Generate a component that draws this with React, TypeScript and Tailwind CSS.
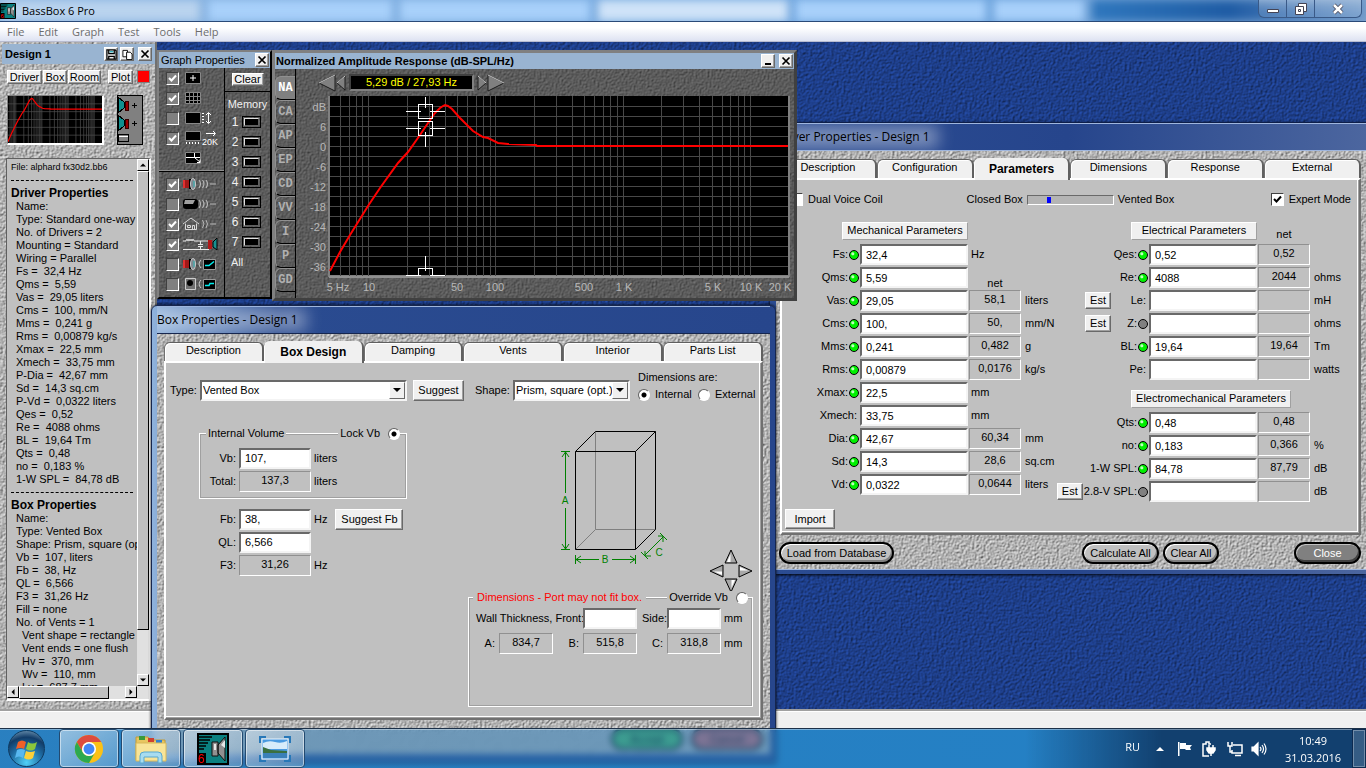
import { useId, type ReactNode } from "react";

type Tone = "light" | "dark" | "blue";

const FILTER: Record<Tone, string> = {
  light: "url(#tex-light)",
  dark: "url(#tex-dark)",
  blue: "url(#tex-blue)",
};

/** Embossed stone patterns shared by every surface of the desktop */
function TextureDefs() {
  const tones = [
    { id: "tex-light", color: "#b4b4b4", depth: 0.9, freq: 0.45 },
    { id: "tex-dark", color: "#5c5c5c", depth: 0.7, freq: 0.5 },
    { id: "tex-blue", color: "#1e3f8b", depth: 0.8, freq: 0.42 },
  ];
  return (
    <svg aria-hidden className="absolute size-0">
      <defs>
        {tones.map((t) => (
          <filter key={t.id} id={t.id} x="0" y="0" width="100%" height="100%" colorInterpolationFilters="sRGB">
            <feTurbulence type="fractalNoise" baseFrequency={t.freq} numOctaves="2" seed="4" />
            <feDiffuseLighting surfaceScale={t.depth} diffuseConstant="1.4" lightingColor={t.color}>
              <feDistantLight azimuth="225" elevation="45" />
            </feDiffuseLighting>
          </filter>
        ))}
      </defs>
    </svg>
  );
}

function Texture({ tone }: { tone: Tone }) {
  return (
    <svg aria-hidden className="absolute inset-0 -z-10 size-full">
      <rect width="100%" height="100%" filter={FILTER[tone]} />
    </svg>
  );
}

function Button({ children, className = "" }: { children: ReactNode; className?: string }) {
  return (
    <button
      type="button"
      className={`flex shrink-0 items-center justify-center border border-t-white border-l-white border-r-[#696969] border-b-[#696969] bg-[#f0f0f0] whitespace-nowrap text-black shadow-[inset_-1px_-1px_0_#a0a0a0] ${className}`}
    >
      {children}
    </button>
  );
}

function PillButton({ children, className = "" }: { children: ReactNode; className?: string }) {
  return (
    <button
      type="button"
      className={`h-[22px] rounded-full border-2 border-black px-1 whitespace-nowrap ${className}`}
    >
      {children}
    </button>
  );
}

function Check({ label, checked, dim = false }: { label: string; checked: boolean; dim?: boolean }) {
  return (
    <span className="relative flex size-[13px] shrink-0">
      <input
        type="checkbox"
        aria-label={label}
        defaultChecked={checked}
        className={`peer size-[13px] appearance-none border border-t-[#404040] border-l-[#404040] border-r-white border-b-white ${dim ? "bg-[#808080]" : "bg-white"}`}
      />
      <svg viewBox="0 0 13 13" className="pointer-events-none absolute inset-0 hidden peer-checked:block">
        <path d="M3 6l2.5 2.5L10 3.5" fill="none" stroke={dim ? "#fff" : "#000"} strokeWidth="2" />
      </svg>
    </span>
  );
}

function Radio({ name, label, checked }: { name: string; label: string; checked: boolean }) {
  return (
    <input
      type="radio"
      name={name}
      aria-label={label}
      defaultChecked={checked}
      className="size-3 shrink-0 appearance-none rounded-full border border-t-[#606060] border-l-[#606060] border-r-white border-b-white bg-white checked:bg-[radial-gradient(circle,#000_0_2px,#fff_3px)]"
    />
  );
}

function Select({ id, value, className }: { id: string; value: string; className: string }) {
  return (
    <div className={`relative h-[21px] shrink-0 ${className}`}>
      <select
        id={id}
        defaultValue={value}
        className="size-full appearance-none border-2 border-t-[#696969] border-l-[#696969] border-r-[#f4f4f4] border-b-[#f4f4f4] bg-white pl-px"
      >
        <option>{value}</option>
      </select>
      <span className="pointer-events-none absolute inset-y-[2px] right-[2px] flex w-4 items-center justify-center border border-t-white border-l-white border-r-[#696969] border-b-[#696969] bg-[#f0f0f0]">
        <svg viewBox="0 0 8 4" className="h-1 w-2">
          <path d="M0 0h8L4 4z" />
        </svg>
      </span>
    </div>
  );
}

const INPUT =
  "h-[21px] shrink-0 border-2 border-t-[#696969] border-l-[#696969] border-r-[#f4f4f4] border-b-[#f4f4f4] bg-white pl-1";
const READOUT =
  "block h-[21px] shrink-0 border border-t-[#909090] border-l-[#909090] border-r-white border-b-white bg-[#c0c0c0] text-center leading-[17px]";

function Led({ on }: { on: boolean }) {
  return (
    <span className="flex w-3 shrink-0 justify-center">
      <span
        className={`size-[10px] rounded-full border border-black ${on ? "bg-[radial-gradient(circle_at_35%_35%,#c0ffc0_0_1px,#00f000_2px)]" : "bg-[#808080]"}`}
      />
    </span>
  );
}

type Param = {
  label: string;
  value: string;
  net?: string;
  caption?: string;
  unit?: string;
  led?: boolean;
  est?: boolean;
};

const MECHANICAL: Param[] = [
  { label: "Fs:", value: "32,4", unit: "Hz", led: true },
  { label: "Qms:", value: "5,59", caption: "net", led: true },
  { label: "Vas:", value: "29,05", net: "58,1", unit: "liters", led: true },
  { label: "Cms:", value: "100,", net: "50,", unit: "mm/N", led: true },
  { label: "Mms:", value: "0,241", net: "0,482", unit: "g", led: true },
  { label: "Rms:", value: "0,00879", net: "0,0176", unit: "kg/s", led: true },
  { label: "Xmax:", value: "22,5", unit: "mm", led: true },
  { label: "Xmech:", value: "33,75", unit: "mm" },
  { label: "Dia:", value: "42,67", net: "60,34", unit: "mm", led: true },
  { label: "Sd:", value: "14,3", net: "28,6", unit: "sq.cm", led: true },
  { label: "Vd:", value: "0,0322", net: "0,0644", unit: "liters", led: true },
];

const ELECTRICAL: Param[] = [
  { label: "Qes:", value: "0,52", net: "0,52", led: true },
  { label: "Re:", value: "4088", net: "2044", unit: "ohms", led: true },
  { label: "Le:", value: "", net: "", unit: "mH", est: true },
  { label: "Z:", value: "", net: "", unit: "ohms", led: false, est: true },
  { label: "BL:", value: "19,64", net: "19,64", unit: "Tm", led: true },
  { label: "Pe:", value: "", net: "", unit: "watts" },
];

const ELECTROMECHANICAL: Param[] = [
  { label: "Qts:", value: "0,48", net: "0,48", led: true },
  { label: "no:", value: "0,183", net: "0,366", unit: "%", led: true },
  { label: "1-W SPL:", value: "84,78", net: "87,79", unit: "dB", led: true },
  { label: "2.8-V SPL:", value: "", net: "", unit: "dB", led: false, est: true },
];

function ParamRow({ p, lead }: { p: Param; lead: string }) {
  const id = useId();
  return (
    <div className="flex h-[23px] items-start">
      <div className={`flex h-[21px] shrink-0 items-center justify-end ${lead}`}>
        {p.est && <Button className="mr-px h-[17px] w-[26px]">Est</Button>}
        <label
          htmlFor={id}
          className={`text-right whitespace-nowrap ${p.led === undefined ? "min-w-[37px] pr-[3px]" : "min-w-[25px]"}`}
        >
          {p.label}
        </label>
        {p.led !== undefined && <Led on={p.led} />}
      </div>
      <input id={id} defaultValue={p.value} className={`w-[108px] ${INPUT}`} />
      {p.net !== undefined && <output className={`ml-px w-[52px] ${READOUT}`}>{p.net}</output>}
      {p.caption && <span className="ml-px w-[52px] self-end text-center">{p.caption}</span>}
      {p.unit && <span className={`leading-[21px] ${p.net === undefined ? "ml-[3px]" : "ml-1"}`}>{p.unit}</span>}
    </div>
  );
}

function SectionTitle({ children, className }: { children: ReactNode; className: string }) {
  return (
    <h3
      className={`h-[18px] border border-t-white border-l-white border-r-[#a0a0a0] border-b-[#a0a0a0] bg-[#f0f0f0] text-center leading-[15px] ${className}`}
    >
      {children}
    </h3>
  );
}

function Tabs({ items, active }: { items: string[]; active: string }) {
  return (
    <div role="tablist" className="flex h-[19px] items-end">
      {items.map((item) => (
        <button
          key={item}
          type="button"
          role="tab"
          aria-selected={item === active}
          className={
            item === active
              ? "z-10 -mb-0.5 h-[22px] flex-1 rounded-t-md border-r-2 border-l border-r-[#606060] border-l-white bg-[#f0f0f0] text-xs font-bold"
              : "h-[19px] flex-1 rounded-t-md border-t border-r-2 border-l border-t-[#606060] border-r-[#606060] border-l-[#707070] bg-[#f0f0f0] pb-[3px] shadow-[inset_1px_1px_0_#fff]"
          }
        >
          {item}
        </button>
      ))}
    </div>
  );
}

function Panel({ children }: { children: ReactNode }) {
  return (
    <div className="border-2 border-t-white border-l-white border-r-[#707070] border-b-[#707070] bg-[#c0c0c0] shadow-[inset_-1px_-1px_0_#a0a0a0,inset_-2px_-2px_0_#fff]">
      {children}
    </div>
  );
}

/** Glass caption with the soft glow behind its text */
function Caption({ children }: { children: ReactNode }) {
  return (
    <h2 className="h-[27px] overflow-hidden border-t border-[#9fb6de] font-['Open_Sans',sans-serif] text-xs leading-[26px]">
      <span className="relative isolate inline-block">
        <span aria-hidden className="absolute -inset-x-2 inset-y-0.5 -z-10 bg-white/40 blur-sm" />
        {children}
      </span>
    </h2>
  );
}

/* ---------- left column: design summary ---------- */

const DRIVER_LINES = [
  "Name:",
  "Type: Standard one-way d",
  "No. of Drivers = 2",
  "Mounting = Standard",
  "Wiring = Parallel",
  "Fs =  32,4 Hz",
  "Qms =  5,59",
  "Vas =  29,05 liters",
  "Cms =  100, mm/N",
  "Mms =  0,241 g",
  "Rms =  0,00879 kg/s",
  "Xmax =  22,5 mm",
  "Xmech =  33,75 mm",
  "P-Dia =  42,67 mm",
  "Sd =  14,3 sq.cm",
  "P-Vd =  0,0322 liters",
  "Qes =  0,52",
  "Re =  4088 ohms",
  "BL =  19,64 Tm",
  "Qts =  0,48",
  "no =  0,183 %",
  "1-W SPL =  84,78 dB",
];

const BOX_LINES = [
  "Name:",
  "Type: Vented Box",
  "Shape: Prism, square (opt",
  "Vb =  107, liters",
  "Fb =  38, Hz",
  "QL =  6,566",
  "F3 =  31,26 Hz",
  "Fill = none",
  "No. of Vents = 1",
  "  Vent shape = rectangle",
  "  Vent ends = one flush",
  "  Hv =  370, mm",
  "  Wv =  110, mm",
  "  Lv =  687,7 mm",
];

function ListLines({ lines }: { lines: string[] }) {
  return (
    <ul className="pl-[5px]">
      {lines.map((line) => (
        <li key={line} className="whitespace-pre">
          {line}
        </li>
      ))}
    </ul>
  );
}

const CURVE: [number, number][] = [
  [0, 175], [10, 156], [20, 139], [38, 110], [50, 92], [68, 67], [78, 56], [90, 39], [96, 30], [105, 17],
  [110, 12], [113, 10], [115, 9], [118, 10], [122, 13], [130, 22], [143, 35], [153, 41], [158, 42], [168, 47],
  [178, 48], [206, 49], [207, 50], [458, 50],
];
const CURVE_POINTS = CURVE.map((p) => p.join(",")).join(" ");

const FREQS = [
  6, 7, 8, 9, 10, 20, 30, 40, 50, 60, 70, 80, 90, 100, 200, 300, 400, 500, 600, 700, 800, 900, 1000, 2000, 3000, 4000,
  5000, 6000, 7000, 8000, 9000, 10000,
];
const freqX = (hz: number) => Math.round(127.2 * Math.log10(hz / 5));

function PlotGrid({ color }: { color: string }) {
  return (
    <g fill={color} shapeRendering="crispEdges">
      {FREQS.map((f) => (
        <rect key={f} x={freqX(f)} width="1" height="180" />
      ))}
      {Array.from({ length: 17 }, (_, i) => (
        <rect key={i} y={(i + 1) * 10} width="458" height="1" />
      ))}
    </g>
  );
}

function Arrow({ dir }: { dir: "up" | "down" | "left" | "right" }) {
  const paths = { up: "M0 6l4-4 4 4z", down: "M0 2l4 4 4-4z", left: "M6 0L2 4l4 4z", right: "M2 0l4 4-4 4z" };
  return (
    <button
      type="button"
      aria-label={`Scroll ${dir}`}
      className="flex size-[12px] shrink-0 items-center justify-center border border-t-white border-l-white border-r-black border-b-black bg-[#e0e0e0]"
    >
      <svg viewBox="0 0 8 8" className="size-[6px]">
        <path d={paths[dir]} />
      </svg>
    </button>
  );
}

function CloseButton() {
  return (
    <Button className="size-[14px]">
      <svg viewBox="0 0 10 10" className="size-[10px]">
        <path d="M1.500 1.500l7 7M8.500 1.500l-7 7" stroke="#000" strokeWidth="1.700" />
      </svg>
    </Button>
  );
}

function DesignWindow() {
  return (
    <aside className="relative isolate flex w-[157px] shrink-0 flex-col border-r-2 border-[#707070] pt-0.5">
      <Texture tone="light" />
      <header className="ml-0.5 flex h-[20px] shrink-0 items-center bg-[#99b4d1] px-[3px]">
        <h2 className="flex-1 text-[11px] font-bold">Design 1</h2>
        <Button className="mr-0.5 size-[14px]">
          <svg viewBox="0 0 12 12" className="size-[11px]" fill="none" stroke="#000" strokeWidth="1.4">
            <path d="M1 1h9l1 1v9H1zM3 1v4h6V1M3 11V8h6v3" />
            <path d="M4 3h4" stroke="#2ab" />
          </svg>
        </Button>
        <Button className="mr-1 size-[14px]">
          <svg viewBox="0 0 12 12" className="size-[11px]" fill="#fff" stroke="#000">
            <path d="M1 1.500h5v7H1z" />
            <path d="M5 3.500h4l2 2v6H5z" />
          </svg>
        </Button>
        <CloseButton />
      </header>
      <div className="mt-1.5 flex pl-[7px]">
        <Button className="h-[14px] w-[35px]">Driver</Button>
        <Button className="ml-px h-[14px] w-6">Box</Button>
        <Button className="ml-px h-[14px] w-[33px]">Room</Button>
        <Button className="ml-[7px] h-[14px] w-[25px]">Plot</Button>
        <span className="ml-1 size-[13px] border border-[#808080] bg-[#f00]" />
      </div>
      <div className="mt-[11px] flex items-start pl-[7px]">
        <svg
          viewBox="0 0 458 180"
          preserveAspectRatio="none"
          className="h-[50px] w-[97px] border border-t-[#808080] border-r-2 border-r-white border-b-2 border-b-white border-l-[#808080] bg-black"
        >
          {FREQS.map((f) => (
            <path key={f} d={`M${freqX(f)} 0v180`} stroke="#505050" strokeWidth="3" />
          ))}
          {[30, 60, 90, 120, 150].map((y) => (
            <path key={y} d={`M0 ${y}h458`} stroke="#505050" strokeWidth="3" />
          ))}
          <polyline points={CURVE_POINTS} fill="none" stroke="#f00" strokeWidth="1.2" vectorEffect="non-scaling-stroke" />
        </svg>
        <svg viewBox="0 0 26 50" className="ml-[13px] h-[50px] w-[26px]" shapeRendering="crispEdges">
          <rect x=".5" y=".5" width="25" height="49" fill="#808080" stroke="#000" />
          {[3, 21].map((y) => (
            <g key={y} transform={`translate(0 ${y})`}>
              <path d="M1 -1l6 5v6l-6 5z" fill="#109090" stroke="#000" />
              <path d="M8 3h3v9H8z" fill="#900" stroke="#300" />
              <path d="M15 7.500h5M17.500 5v5" stroke="#000" />
            </g>
          ))}
          <path d="M1 39h10v7H1z" fill="#808080" stroke="#000" />
          <path d="M2 41h9" stroke="#fff" />
        </svg>
      </div>
      {/* Summary list */}
      <div className="mt-[13px] mr-1 mb-2 ml-1.5 flex min-h-0 flex-1 flex-col border border-t-[#606060] border-r-2 border-r-white border-b-2 border-b-white border-l-[#606060] bg-[#c0c0c0]">
        <div className="flex min-h-0 flex-1">
          <div className="min-w-0 flex-1 overflow-hidden pt-0.5 pl-1">
            <p className="text-[9px] whitespace-nowrap">File: alphard fx30d2.bb6</p>
            <div className="my-1.5 mr-1 border-t border-dashed border-black" />
            <h3 className="text-xs leading-[13px] font-bold">Driver Properties</h3>
            <ListLines lines={DRIVER_LINES} />
            <div className="my-1.5 mr-1 border-t border-dashed border-black" />
            <h3 className="text-xs leading-[13px] font-bold">Box Properties</h3>
            <ListLines lines={BOX_LINES} />
          </div>
          <div className="flex w-[12px] flex-col bg-[#e0e0e0]">
            <Arrow dir="up" />
            <div className="mb-11 flex-1 border border-t-white border-r-black border-b-black border-l-white bg-[#c0c0c0]" />
            <Arrow dir="down" />
          </div>
        </div>
        <div className="flex h-[13px] shrink-0 bg-[#e0e0e0] pr-3">
          <Arrow dir="left" />
          <div className="mr-4 flex-1 border border-t-white border-r-black border-b-black border-l-white bg-[#c0c0c0]" />
          <Arrow dir="right" />
        </div>
      </div>
    </aside>
  );
}

/* ---------- graph properties palette ---------- */

function SpeakerGlyph() {
  return (
    <>
      <path d="M1 4h6v8H1z" fill="#a01818" />
      <path d="M1 4h2v8H1z" fill="#e03030" />
      <path d="M7 3h2v10H7z" fill="#000" />
      <ellipse cx="11" cy="8" rx="2.500" ry="5.500" fill="#808890" stroke="#c8c8c8" />
      <path d="M12 5v6" stroke="#3bb" />
    </>
  );
}

function Waves() {
  return (
    <path d="M17 4q3 4 0 8M20.500 4q3 4 0 8M24 4q3 4 0 8M28 8h6" fill="none" stroke="#b8b8b8" strokeWidth="1.200" />
  );
}

const DISPLAY_ICONS: { label: string; checked?: boolean; art: ReactNode }[] = [
  {
    label: "Cursor",
    checked: true,
    art: (
      <>
        <path d="M3.500 2.500h15v11h-15z" fill="#000" stroke="#888" />
        <path d="M8 8h6M11 5v6" stroke="#fff" />
      </>
    ),
  },
  {
    label: "Grid",
    checked: true,
    art: (
      <>
        <path d="M3.500 2.500h15v11h-15z" fill="#000" stroke="#888" />
        <path d="M4 6.500h14M4 10.500h14M7.500 3v10M11.500 3v10M15.500 3v10" stroke="#888" />
      </>
    ),
  },
  {
    label: "Vertical scale",
    checked: false,
    art: (
      <>
        <path d="M3.500 2.500h15v11h-15z" fill="#000" stroke="#888" />
        <path d="M20 3.500h2M20 6.500h2M20 9.500h2M20 12.500h2M26.500 3v10M24 5l2.500-2.500L29 5M24 11l2.500 2.500L29 11" fill="none" stroke="#fff" />
      </>
    ),
  },
  {
    label: "Extend to 20K",
    checked: true,
    art: (
      <>
        <path d="M3.500 1.500h15v9h-15z" fill="#000" stroke="#888" />
        <path d="M4 13h15" stroke="#fff" strokeDasharray="1 2" strokeWidth="2" />
        <path d="M24 3.500h9M31 1l2.500 2.500L31 6" fill="none" stroke="#fff" />
        <text x="20" y="15" fontSize="9" fill="#fff">
          20K
        </text>
      </>
    ),
  },
  {
    label: "Resize",
    art: (
      <>
        <path d="M3.500 2.500h15v11h-15z" fill="#000" stroke="#888" />
        <path d="M4 7.500h14M12.500 3v5M13 8l5 4M15 12.500h3v-3" fill="none" stroke="#fff" />
      </>
    ),
  },
];

const RESPONSE_ICONS: { label: string; checked: boolean; art: ReactNode }[] = [
  {
    label: "Driver response",
    checked: true,
    art: (
      <>
        <SpeakerGlyph />
        <Waves />
      </>
    ),
  },
  {
    label: "Box response",
    checked: false,
    art: (
      <>
        <rect x="1" y="3" width="15" height="10" rx="3" fill="#000" />
        <path d="M3 4h10l-2 4H2z" fill="#a0a0a0" />
        <Waves />
      </>
    ),
  },
  {
    label: "Room response",
    checked: true,
    art: (
      <>
        <path d="M1 8l8-6 8 6M3.500 7.500v6h11v-6M5.500 9.500h3v2h-3zM10.500 13V9.500h2V13" fill="none" stroke="#d8d8d8" />
        <path d="M20.500 4q3 4 0 8M24 4q3 4 0 8M28 8h6" fill="none" stroke="#b8b8b8" />
      </>
    ),
  },
  {
    label: "Crossover network",
    checked: true,
    art: (
      <>
        <path
          d="M1 5h3q1-4 2 0q1-4 2 0q1-4 2 0q1-4 2 0h14M1 13.500h26M18.500 5v3M16 8.500h5M16 10.500h5M18.500 11v2"
          fill="none"
          stroke="#e8e8e8"
        />
        <path d="M26 4h4v9h-4z" fill="#b01818" />
        <path d="M35 2v12l-4-3V6z" fill="#189090" stroke="#000" />
      </>
    ),
  },
  {
    label: "Driver transfer",
    checked: false,
    art: (
      <>
        <SpeakerGlyph />
        <path d="M19 4q-4 4 0 8" fill="none" stroke="#c8c8c8" />
        <path d="M21.500 3.500h12v10h-12z" fill="#000" stroke="#999" />
        <path d="M23 9.500h4l5-4" fill="none" stroke="#0ee" strokeWidth="1.500" />
      </>
    ),
  },
  {
    label: "Box transfer",
    checked: false,
    art: (
      <>
        <path d="M3.500 2.500h10v11h-10z" fill="#707070" stroke="#ccc" />
        <circle cx="8" cy="7" r="3" />
        <path d="M19 4q-4 4 0 8" fill="none" stroke="#c8c8c8" />
        <path d="M21.500 3.500h12v10h-12z" fill="#000" stroke="#999" />
        <path d="M23 9.500h4l1-2h4" fill="none" stroke="#0ee" strokeWidth="1.500" />
      </>
    ),
  },
];

function IconRow({ label, checked, art }: { label: string; checked?: boolean; art: ReactNode }) {
  return (
    <div className="flex h-5 items-center pl-[7px]">
      {checked === undefined ? <span className="size-[13px]" /> : <Check label={label} checked={checked} dim />}
      <svg viewBox="0 0 38 16" className="ml-[3px] h-4 w-[38px]">
        {art}
      </svg>
    </div>
  );
}

function GraphProperties() {
  return (
    <section className="absolute top-2 left-[157px] isolate w-[115px] border-2 border-t-[#808080] border-r-black border-b-black border-l-[#808080]">
      <Texture tone="dark" />
      <header className="flex h-[16px] items-center bg-[#99b4d1] pr-px pl-0.5">
        <h2 className="flex-1">Graph Properties</h2>
        <CloseButton />
      </header>
      <div className="flex">
        <div className="w-[66px] border-r border-black">
          <div className="border-b border-[#909090] pb-0.5">
            {DISPLAY_ICONS.map((row) => (
              <IconRow key={row.label} {...row} />
            ))}
          </div>
          <div className="border-t border-black pt-0.5 pb-[3px]">
            {RESPONSE_ICONS.map((row) => (
              <IconRow key={row.label} {...row} />
            ))}
          </div>
        </div>
        <div className="flex flex-1 flex-col text-[#f0f0f0]">
          <div className="flex h-6 items-center justify-center border-b border-black">
            <Button className="h-[13px] w-8">Clear</Button>
          </div>
          <h3 className="h-5 text-center leading-6">Memory</h3>
          {[1, 2, 3, 4, 5, 6, 7].map((n) => (
            <button key={n} type="button" className="flex h-5 items-center gap-[3px] pl-1.5">
              <span className="w-2 text-xs">{n}</span>
              <span className="h-3 w-[19px] border border-black p-px">
                <span className="block size-full border border-t-[#e0e0e0] border-r-[#606060] border-b-[#606060] border-l-[#e0e0e0] bg-black" />
              </span>
            </button>
          ))}
          <button type="button" className="h-5 pl-1.5 text-left">
            All
          </button>
        </div>
      </div>
    </section>
  );
}

/* ---------- amplitude response graph ---------- */

const GRAPH_TABS = ["NA", "CA", "AP", "EP", "CD", "VV", "I", "P", "GD"];
const X_LABELS: [string, number][] = [
  ["5 Hz", 8], ["10", 39], ["50", 127], ["100", 165], ["500", 254], ["1 K", 294], ["5 K", 383], ["10 K", 421], ["20 K", 450],
];

function StepArrow({ big, flip = false }: { big: boolean; flip?: boolean }) {
  return (
    <svg
      viewBox={big ? "0 0 18 18" : "0 0 10 18"}
      className={`h-[18px] ${big ? "w-[18px]" : "w-[10px]"} ${flip ? "-scale-x-100" : ""}`}
    >
      <path d={big ? "M1 9L17 1v16z" : "M1 9l8-7v14z"} fill="#808080" stroke="#1c1c1c" />
      <path d={big ? "M1 9L17 1" : "M1 9l8-7"} stroke="#c8c8c8" />
    </svg>
  );
}

function GraphWindow() {
  return (
    <section className="absolute top-2 left-[272px] isolate w-[525px] border-[3px] border-t-[#808080] border-r-[#404040] border-b-[#404040] border-l-[#808080]">
      <Texture tone="dark" />
      <header className="flex h-[16px] items-center bg-[#99b4d1] px-px">
        <h2 className="flex-1 text-[11px] font-bold whitespace-nowrap">Normalized Amplitude Response (dB-SPL/Hz)</h2>
        <Button className="mr-1 size-[14px]">
          <span className="mt-1.5 h-0.5 w-1.5 bg-black" />
        </Button>
        <CloseButton />
      </header>
      <div className="flex">
        <nav className="w-[21px] border-r border-black pt-[7px] pb-1.5">
          {GRAPH_TABS.map((tab) => (
            <button
              key={tab}
              type="button"
              className={`block h-6 w-full rounded-l-md border-t border-b border-l border-t-[#909090] border-b-black border-l-[#909090] font-mono text-xs font-bold ${tab === "NA" ? "bg-[#808080] text-white" : "text-[#b0b0b0]"}`}
            >
              {tab}
            </button>
          ))}
        </nav>
        <div className="flex-1">
          <div className="flex h-[27px] items-center pl-[22px]">
            <StepArrow big />
            <StepArrow big={false} />
            <output className="mx-[3px] h-[17px] w-[125px] border-2 border-t-[#404040] border-r-[#808080] border-b-[#808080] border-l-[#404040] bg-black text-center leading-[13px] text-[#ff0]">
              5,29 dB / 27,93 Hz
            </output>
            <StepArrow big={false} flip />
            <StepArrow big flip />
          </div>
          <svg viewBox="-34 0 498 202" className="block h-[202px] w-[498px]" fontSize="11">
            <path d="M-1 0v180h460V0" fill="#000" stroke="#808080" strokeWidth="2" />
            <path d="M-1 181h460" stroke="#909090" strokeWidth="2" />
            <PlotGrid color="#484848" />
            <polyline points={CURVE_POINTS} fill="none" stroke="#f00" strokeWidth="2" />
            <g stroke="#fff" fill="none" shapeRendering="crispEdges">
              <path d="M88.500 8.500h14v14h-14zM95.500 1v11M76 15.500h15M100 15.500h15" />
              <path d="M88.500 25.500h14v14h-14zM95.500 36v15M76 32.500h15M100 32.500h15" />
              <path d="M88.500 180v-8h14v8M95.500 160v15M76 179.500h15M100 179.500h15" />
            </g>
            <g fill="#b8b8b8" textAnchor="end">
              {["dB", "6", "0", "-6", "-12", "-18", "-24", "-30", "-36"].map((label, i) => (
                <text key={label} x="-4" y={15 + i * 20}>
                  {label}
                </text>
              ))}
            </g>
            <g fill="#b8b8b8" textAnchor="middle">
              {X_LABELS.map(([label, x]) => (
                <text key={label} x={x} y="195">
                  {label}
                </text>
              ))}
            </g>
          </svg>
        </div>
      </div>
    </section>
  );
}

/* ---------- driver properties ---------- */

function DriverWindow() {
  return (
    <section className="absolute top-20 right-0 left-[770px] border-t border-[#0e1f4a] bg-linear-to-r from-[#2b4c92] via-[#26458c] to-[#4c669f] pb-1 pl-1.5 shadow-[0_1px_3px_#000]">
      <Caption>Driver Properties - Design 1</Caption>
      <div className="relative isolate border-y border-y-[#9fb6de] pt-2 pr-[5px] pl-1">
        <Texture tone="light" />
        <Tabs
          items={["Description", "Configuration", "Parameters", "Dimensions", "Response", "External"]}
          active="Parameters"
        />
        <Panel>
          <div className="flex h-[26px] items-end pr-2 pl-2">
            <label className="flex items-center gap-[5px]">
              <Check label="Dual Voice Coil" checked={false} />
              Dual Voice Coil
            </label>
            <label className="ml-[84px] flex items-center gap-1">
              Closed Box
              <input
                type="range"
                defaultValue="24"
                className="h-[10px] w-[87px] appearance-none border border-t-[#696969] border-r-white border-b-white border-l-[#696969] bg-[#b4b4b4] [&::-webkit-slider-thumb]:h-1.5 [&::-webkit-slider-thumb]:w-1 [&::-webkit-slider-thumb]:appearance-none [&::-webkit-slider-thumb]:bg-[#00f]"
              />
              Vented Box
            </label>
            <label className="ml-auto flex items-center gap-[5px]">
              <Check label="Expert Mode" checked />
              Expert Mode
            </label>
          </div>
          <div className="mt-4 flex pb-1">
            <div className="w-[273px] shrink-0">
              <SectionTitle className="mb-1 ml-[60px] w-[126px]">Mechanical Parameters</SectionTitle>
              {MECHANICAL.map((p) => (
                <ParamRow key={p.label} p={p} lead="w-[78px]" />
              ))}
              <Button className="mt-3 ml-[3px] h-5 w-[50px]">Import</Button>
            </div>
            <div>
              <div className="mb-1 flex items-end">
                <SectionTitle className="ml-[76px] w-[126px]">Electrical Parameters</SectionTitle>
                <span className="w-[54px] text-center leading-[11px]">net</span>
              </div>
              {ELECTRICAL.map((p) => (
                <ParamRow key={p.label} p={p} lead="w-[94px]" />
              ))}
              <SectionTitle className="mt-2 mb-1 ml-[76px] w-[160px]">Electromechanical Parameters</SectionTitle>
              {ELECTROMECHANICAL.map((p) => (
                <ParamRow key={p.label} p={p} lead="w-[94px]" />
              ))}
            </div>
          </div>
        </Panel>
        <div className="-ml-px flex gap-1 pt-[7px] pb-[5px]">
          <PillButton className="mr-auto w-[115px] bg-[#c0c0c0] shadow-[inset_1px_1px_0_#fff,inset_-1px_-2px_0_#808080]">
            Load from Database
          </PillButton>
          <PillButton className="w-[77px] bg-[#c0c0c0] shadow-[inset_1px_1px_0_#fff,inset_-1px_-2px_0_#808080]">
            Calculate All
          </PillButton>
          <PillButton className="w-14 bg-[#c0c0c0] shadow-[inset_1px_1px_0_#fff,inset_-1px_-2px_0_#808080]">
            Clear All
          </PillButton>
          <PillButton className="ml-[71px] w-[67px] bg-[#808080] text-white shadow-[inset_1px_1px_0_#c0c0c0,inset_-1px_-2px_0_#404040]">
            Close
          </PillButton>
        </div>
      </div>
    </section>
  );
}

/* ---------- box properties ---------- */

function BoxField({ label, value, unit, readOnly = false }: { label: string; value: string; unit?: string; readOnly?: boolean }) {
  const id = useId();
  return (
    <div className="flex h-[23px] items-start leading-[21px]">
      <label htmlFor={id} className="w-10 pr-[3px] text-right">
        {label}
      </label>
      {readOnly ? (
        <output id={id} className={`w-[72px] ${READOUT}`}>
          {value}
        </output>
      ) : (
        <input id={id} defaultValue={value} className={`w-[72px] ${INPUT}`} />
      )}
      {unit && <span className="ml-[3px]">{unit}</span>}
    </div>
  );
}

function Prism() {
  return (
    <svg viewBox="0 0 115 145" className="ml-[87px] h-[145px] w-[115px]" fill="none">
      <path d="M40.500 6.500v98h60M40.500 104.500l-20 20" stroke="#808080" />
      <path d="M20.500 26.500h60v98h-60zM20.500 26.500l20-20h60v98l-20 20M80.500 26.500l20-20" stroke="#000" />
      <g stroke="#008000">
        <path d="M10.500 27v41M10.500 83v41M6 26.500h9M6 124.500h9M7 32l3.500-5 3.500 5M7 119l3.500 5 3.500-5" />
        <path d="M20.500 130v9M80.500 130v9M21 134.500h23M57 134.500h23M26 131l-5 3.500 5 3.500M75 131l5 3.500-5 3.500" />
        <path d="M89 131l20-20M86 127l7 7M105 108l7 7M90 126v5h6M103 111h5v6" />
      </g>
      <g fill="#008000" fontSize="10" textAnchor="middle">
        <text x="10" y="79">
          A
        </text>
        <text x="50" y="138">
          B
        </text>
        <text x="104" y="131">
          C
        </text>
      </g>
    </svg>
  );
}

function Compass() {
  return (
    <svg viewBox="0 0 44 44" className="ml-auto size-11 self-end">
      {[0, 90, 180, 270].map((deg) => (
        <g key={deg} transform={`rotate(${deg} 22 22)`}>
          <path d="M22 1l6 13H16z" fill="#a8a8a8" stroke="#000" />
          <path d="M21.500 5l-3.500 8h3.500z" fill="#fff" />
        </g>
      ))}
    </svg>
  );
}

function DimReadout({ label, value }: { label: string; value: string }) {
  return (
    <>
      <span className="pr-1 text-right">{label}</span>
      <output className={READOUT}>{value}</output>
    </>
  );
}

const GROUP = "border border-white shadow-[inset_0_0_0_1px_#a0a0a0]";

function BoxWindow() {
  return (
    <section className="absolute top-[263px] left-[151px] w-[625px] rounded-t-md border border-[#16264e] bg-linear-to-r from-[#8fb2dc] via-[#2a4b90] via-20% to-[#27468c] px-[5px] pb-2 shadow-[0_0_3px_#000]">
      <Caption>Box Properties - Design 1</Caption>
      <div className="relative isolate border-t border-[#16264e] px-[7px] pt-2 pb-1">
        <Texture tone="light" />
        <Tabs items={["Description", "Box Design", "Damping", "Vents", "Interior", "Parts List"]} active="Box Design" />
        <Panel>
          <div className="flex pt-2 pl-1">
            <div className="mt-2 flex items-center">
              <label htmlFor="box-type" className="w-[30px]">
                Type:
              </label>
              <Select id="box-type" value="Vented Box" className="w-[207px]" />
              <Button className="ml-1.5 h-[21px] w-[51px]">Suggest</Button>
              <label htmlFor="box-shape" className="ml-[11px] w-[38px]">
                Shape:
              </label>
              <Select id="box-shape" value="Prism, square (opt.)" className="w-[117px]" />
            </div>
            <div className="ml-2 whitespace-nowrap">
              <p>Dimensions are:</p>
              <div className="mt-1 flex items-center">
                <Radio name="dims" label="Internal" checked />
                <span className="ml-[5px] w-[43px]">Internal</span>
                <Radio name="dims" label="External" checked={false} />
                <span className="ml-[5px]">External</span>
              </div>
            </div>
          </div>
          <div className="flex pb-[11px]">
            <div className="mt-8 ml-[33px] w-[208px] shrink-0">
              <div role="group" aria-label="Internal Volume" className={`pb-1 ${GROUP}`}>
                <div className="-mt-[7px] flex items-center px-1.5">
                  <h3 className="bg-[#c0c0c0] px-0.5">Internal Volume</h3>
                  <label className="ml-auto flex items-center gap-2 bg-[#c0c0c0] pl-0.5">
                    Lock Vb
                    <Radio name="lock" label="Lock Vb" checked />
                  </label>
                </div>
                <div className="-ml-px pt-2">
                  <BoxField label="Vb:" value="107," unit="liters" />
                  <BoxField label="Total:" value="137,3" unit="liters" readOnly />
                </div>
              </div>
              <div className="mt-2.5">
                <div className="flex">
                  <BoxField label="Fb:" value="38," unit="Hz" />
                  <Button className="ml-2 h-[21px] w-[68px]">Suggest Fb</Button>
                </div>
                <BoxField label="QL:" value="6,566" />
                <BoxField label="F3:" value="31,26" unit="Hz" readOnly />
              </div>
            </div>
            <div className="mt-6 ml-[61px] w-[285px] shrink-0">
              <div className="flex h-[168px] items-start">
                <Prism />
                <Compass />
              </div>
              <div role="group" aria-label="Dimensions" className={`mt-1 h-[110px] ${GROUP}`}>
                <div className="-mt-[7px] flex items-center px-1">
                  <h3 className="bg-[#c0c0c0] px-1 whitespace-nowrap text-[#f00]">Dimensions - Port may not fit box.</h3>
                  <label className="ml-auto flex items-center gap-2 bg-[#c0c0c0] pl-0.5">
                    Override Vb
                    <Radio name="override" label="Override Vb" checked={false} />
                  </label>
                </div>
                <div className="mt-1 flex items-center pl-[7px]">
                  <label htmlFor="front" className="w-[107px] whitespace-nowrap">
                    Wall Thickness, Front:
                  </label>
                  <input id="front" className={`w-[54px] ${INPUT}`} />
                  <label htmlFor="side" className="w-[30px] pl-[5px]">
                    Side:
                  </label>
                  <input id="side" className={`w-[54px] ${INPUT}`} />
                  <span className="ml-[3px]">mm</span>
                </div>
                <div className="mt-1 grid grid-cols-[30px_54px_30px_54px_30px_54px_1fr] items-center">
                  <DimReadout label="A:" value="834,7" />
                  <DimReadout label="B:" value="515,8" />
                  <DimReadout label="C:" value="318,8" />
                  <span className="ml-[3px]">mm</span>
                </div>
              </div>
            </div>
          </div>
        </Panel>
        <div className="flex justify-end gap-2 pt-2">
          <PillButton className="w-[72px] bg-[#50b860]">Accept</PillButton>
          <PillButton className="w-[72px] bg-[#d06868]">Cancel</PillButton>
        </div>
      </div>
    </section>
  );
}

/* ---------- application frame and taskbar ---------- */

function BassBoxIcon({ className }: { className: string }) {
  return (
    <svg viewBox="0 0 32 32" className={className}>
      <path d="M1 1h30v30H1z" fill="#0a8080" stroke="#000" strokeWidth="2" />
      <path d="M2 4h13M2 7h11M2 10h9M2 13h7M2 16h5" stroke="#000" strokeWidth="1.500" />
      <path d="M15 9h6v14h-6zM21 12l7-8v24l-7-8z" fill="#909090" stroke="#111" />
      <path d="M17 11h2v6h-2zM24 12l4-5v8z" fill="#e8e8e8" />
      <path d="M0 20h9v12H0z" fill="#000" />
      <text x="1" y="30" fontSize="12" fill="#f00">
        6
      </text>
    </svg>
  );
}

function TitleBar() {
  return (
    <header className="relative isolate flex h-[22px] shrink-0 items-center overflow-hidden border-b border-[#2a4a78] bg-linear-to-r from-[#8bb4e0] via-[#6ba3dd] via-70% to-[#7fa2cc]">
      <div className="absolute inset-0 -z-10 flex gap-2 blur-xs">
        <span className="w-[200px] bg-[#b9d3ee]" />
        <span className="w-[184px] bg-[#a8d0fa]" />
        <span className="w-[190px] bg-[#a8d0fa]" />
        <span className="w-[190px] bg-[#cfe3f8]" />
        <span className="w-[190px] bg-[#a8d0fa]" />
        <span className="w-[90px] bg-[#a8d0fa]" />
        <span className="flex-1 bg-linear-to-r from-[#2f77bd] via-[#1f5ca4] to-[#6d97c8]" />
      </div>
      <BassBoxIcon className="size-4" />
      <h1 className="ml-1.5 flex-1 font-['Open_Sans',sans-serif] text-[11px]">BassBox 6 Pro</h1>
      <div className="mr-1 flex h-[18px] self-start rounded-b-md border border-t-0 border-[#3a5a88] bg-linear-to-b from-white/30 to-white/10">
        <button type="button" aria-label="Minimize" className="flex w-7 items-center justify-center border-r border-[#3a5a88]">
          <svg viewBox="0 0 12 12" className="size-3">
            <path d="M.5 6.500h11v3H.5z" fill="#fff" stroke="#445" />
          </svg>
        </button>
        <button type="button" aria-label="Restore" className="flex w-7 items-center justify-center border-r border-[#3a5a88]">
          <svg viewBox="0 0 12 12" className="size-3" fill="#fff" stroke="#445">
            <path d="M3.500.5h8v8h-8z" />
            <path d="M.5 3.500h8v8h-8zM3.500 6.500h2v2h-2z" />
          </svg>
        </button>
        <button type="button" aria-label="Close" className="flex w-[46px] items-center justify-center">
          <svg viewBox="0 0 12 12" className="size-3">
            <path d="M2 2l8 8M10 2l-8 8" stroke="#445" strokeWidth="4" />
            <path d="M2 2l8 8M10 2l-8 8" stroke="#fff" strokeWidth="2.500" />
          </svg>
        </button>
      </div>
    </header>
  );
}

function ChromeIcon() {
  return (
    <svg viewBox="0 0 32 32" className="size-[30px]">
      <circle cx="16" cy="16" r="15" fill="#fbc116" />
      <path d="M3 8.500A15 15 0 0 1 29 8.500H16A7.500 7.500 0 0 0 9.500 19.700z" fill="#dd4b3e" />
      <path d="M3 8.500A15 15 0 0 0 16 31l6.500-11.300a7.500 7.500 0 0 1-13 0z" fill="#2da94f" />
      <circle cx="16" cy="16" r="7.500" fill="#fff" />
      <circle cx="16" cy="16" r="5.800" fill="#4286f5" />
    </svg>
  );
}

function ExplorerIcon() {
  return (
    <svg viewBox="0 0 32 30" className="h-[30px] w-8">
      <path d="M1 3h12l2 3h15v20H1z" fill="#e8c660" stroke="#c09a38" />
      <path d="M4 2h6v4H4z" fill="#3a9a3a" />
      <path d="M13 4h6v4h-6z" fill="#d04030" />
      <path d="M21 6h6v4h-6z" fill="#3080d0" />
      <path d="M1 9h30v18H1z" fill="#f8e498" stroke="#d8b858" />
      <path d="M5 29v-7q0-4 4-4h14q4 0 4 4v7h-4v-6H9v6z" fill="#a8dcf0" stroke="#58a8d0" />
    </svg>
  );
}

function PictureIcon() {
  return (
    <svg viewBox="0 0 32 26" className="h-[26px] w-8">
      <path d="M1 7V1h6M25 1h6v6M31 19v6h-6M7 25H1v-6" fill="none" stroke="#2878b8" strokeWidth="2" />
      <path d="M3 3h26v20H3z" fill="#4a9ae0" stroke="#e8f4ff" />
      <path d="M4 7q6-3 12-1t12-1v8H4z" fill="#d8ecfa" />
      <path d="M4 11l8 3 16 1v3H4z" fill="#3a7040" />
      <path d="M4 17h24v5H4z" fill="#3a80b8" />
    </svg>
  );
}

function StartOrb() {
  return (
    <button
      type="button"
      aria-label="Start"
      className="ml-2 flex size-[37px] items-center justify-center rounded-full border border-[#0e3a60] bg-[radial-gradient(circle_at_50%_90%,#50d0f8,#1e6aa0_45%,#123c68_70%,#8fb4cc)]"
    >
      <svg viewBox="0 0 24 24" className="size-6">
        <path d="M3 5q4-3 8 0l-2 7q-3-2-8 0z" fill="#f06028" />
        <path d="M13 5q4 3 9 0l-2 7q-4 3-9 0z" fill="#8cc83c" />
        <path d="M2 13q4-2 8 0l-2 8q-4-3-8 0z" fill="#58b8f0" />
        <path d="M11 14q4 2 9 0l-2 7q-4 3-9 0z" fill="#fcd038" />
      </svg>
    </button>
  );
}

function Taskbar() {
  const apps = [
    { name: "Chrome", icon: <ChromeIcon /> },
    { name: "Explorer", icon: <ExplorerIcon /> },
    { name: "BassBox", icon: <BassBoxIcon className="size-8" /> },
    { name: "Pictures", icon: <PictureIcon /> },
  ];
  return (
    <footer className="relative z-20 flex h-10 shrink-0 items-center border-t border-[#1c3048] bg-linear-to-r from-[#2f7fbc]/50 via-[#2580c4]/50 via-75% to-[#12406f] to-85% shadow-[inset_0_1px_0_rgba(255,255,255,.4)] backdrop-blur-[3px]">
      <StartOrb />
      <div className="ml-3.5 flex gap-0.5">
        {apps.map((app) => (
          <button
            key={app.name}
            type="button"
            aria-label={app.name}
            className="flex h-[39px] w-[60px] items-center justify-center rounded-sm border border-[#234a70] bg-linear-to-br from-white/50 to-white/20 shadow-[inset_0_0_0_1px_rgba(255,255,255,.5)]"
          >
            {app.icon}
          </button>
        ))}
      </div>
      <div className="ml-auto flex h-full items-center font-['Open_Sans',sans-serif] text-[11px] text-white">
        <span className="mr-4 pb-1">RU</span>
        <svg viewBox="0 0 8 4" className="mr-[13px] h-1 w-2">
          <path d="M0 4l4-4 4 4z" fill="#fff" />
        </svg>
        <svg viewBox="0 0 16 16" className="mr-2 size-4" fill="#fff">
          <path d="M1 1h1.500v14H1zM3 2h6v2h6l-2 2.500 1 2.500H9L8 8H3z" />
        </svg>
        <svg viewBox="0 0 16 16" className="mr-2.5 size-4" fill="none" stroke="#fff" strokeWidth="1.500">
          <path d="M10 3H8V1H5v2H2v12h6" />
          <path d="M8 4v3M12 4v3M6 7h8v2l-2 3H8L6 9zM10 12v3" fill="#fff" />
        </svg>
        <svg viewBox="0 0 16 16" className="mr-2 size-4" fill="none" stroke="#fff" strokeWidth="1.500">
          <path d="M6 4h9v8H5V9M8 14.500h6M1 1v4h4V1M3 5v6h2" />
        </svg>
        <svg viewBox="0 0 16 16" className="mr-4 size-4" fill="none" stroke="#fff" strokeWidth="1.200">
          <path d="M1 6h2l4-4v12l-4-4H1z" fill="#fff" />
          <path d="M9 6q2 2 0 4M11 4q3 4 0 8M13 2.500q4 5.500 0 11" />
        </svg>
        <time className="w-[60px] text-center leading-[17px]">
          10:49
          <br />
          31.03.2016
        </time>
        <button
          type="button"
          aria-label="Show desktop"
          className="ml-[9px] h-full w-[14px] border border-[#0c2a50] bg-white/15 shadow-[inset_0_0_0_1px_rgba(255,255,255,.3)]"
        />
      </div>
    </footer>
  );
}

export default function App() {
  return (
    <div className="relative flex h-screen min-h-[600px] flex-col overflow-hidden bg-[#2580c4] font-['Liberation_Sans',Arial,sans-serif] text-[11px] leading-[13px] text-black">
      <TextureDefs />
      <TitleBar />
      <nav className="flex h-5 shrink-0 items-center gap-[14px] border-b border-[#b8bcd0] bg-linear-to-b from-white from-30% to-[#dde2f2] pl-[7px] font-['Open_Sans',sans-serif] text-[11px] text-[#6d6d6d]">
        {["File", "Edit", "Graph", "Test", "Tools", "Help"].map((item) => (
          <a key={item} href={`#${item.toLowerCase()}`}>
            {item}
          </a>
        ))}
      </nav>
      <main className="relative isolate z-10 flex min-h-0 flex-1">
        <Texture tone="blue" />
        <DesignWindow />
        <DriverWindow />
        <BoxWindow />
        <GraphProperties />
        <GraphWindow />
      </main>
      <div
        role="status"
        className="h-[19px] shrink-0 border-t-2 border-[#a0a0a0] bg-[#f0f0f0] shadow-[inset_0_1px_0_#fff]"
      />
      <Taskbar />
    </div>
  );
}
